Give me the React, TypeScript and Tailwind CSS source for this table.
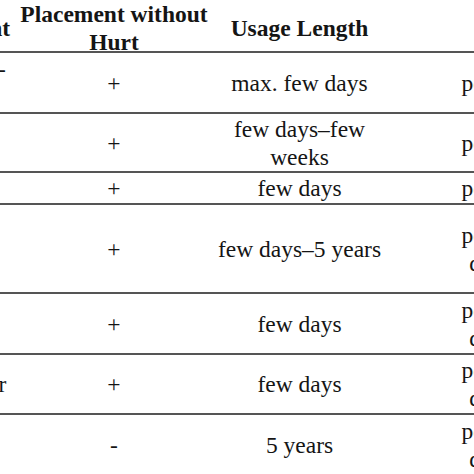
import React from "react";

interface Row {
  height: string;
  device: string[];
  hurt: string;
  usage: string[];
  pain: string[];
}

const rows: Row[] = [
  { height: "h-[61px]", device: ["Short cath-", "eter"], hurt: "+", usage: ["max. few days"], pain: ["possible"] },
  { height: "h-[59px]", device: ["Midline", "catheter"], hurt: "+", usage: ["few days–few", "weeks"], pain: ["possible"] },
  { height: "h-[32px]", device: ["Needle"], hurt: "+", usage: ["few days"], pain: ["possible"] },
  { height: "h-[89px]", device: ["Central", "venous", "catheter"], hurt: "+", usage: ["few days–5 years"], pain: ["possible", "during"] },
  { height: "h-[61px]", device: ["PICC", "line"], hurt: "+", usage: ["few days"], pain: ["possible", "during"] },
  { height: "h-[60px]", device: ["IV catheter"], hurt: "+", usage: ["few days"], pain: ["possible", "during"] },
  { height: "h-[61px]", device: ["Port", "system"], hurt: "-", usage: ["5 years"], pain: ["possible", "during"] },
];

const cols = "grid grid-cols-[120px_200px_171px_230px]";

function Cell({ lines, align = "justify-center" }: { lines: string[]; align?: string }) {
  return (
    <div className={`flex flex-col items-center ${align} text-center whitespace-nowrap`}>
      {lines.map((l, i) => (
        <span key={i}>{l}</span>
      ))}
    </div>
  );
}

export default function App() {
  return (
    <div
      className="w-[474px] h-[474px] overflow-hidden bg-white text-[#151515] text-[23.5px] leading-[28px]"
      style={{ fontFamily: '"Liberation Serif", "Times New Roman", serif' }}
    >
      <div className="-ml-[106px] w-[721px]">
        <div className={`${cols} h-[53px] border-b-2 border-[#555] font-bold`}>
          <Cell lines={["Equipment"]} />
          <Cell lines={["Placement without", "Hurt"]} align="justify-end" />
          <Cell lines={["Usage Length"]} />
          <Cell lines={["Pain"]} />
        </div>
        {rows.map((r, i) => (
          <div key={i} className={`${cols} ${r.height} border-b-2 border-[#555]`}>
            <Cell lines={r.device} />
            <Cell lines={[r.hurt]} />
            <Cell lines={r.usage} />
            <Cell lines={r.pain} />
          </div>
        ))}
      </div>
    </div>
  );
}
